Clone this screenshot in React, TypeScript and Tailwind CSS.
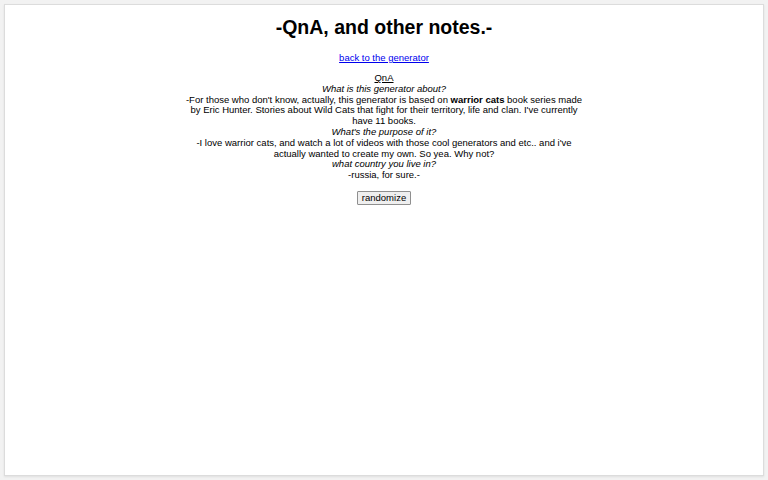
export default function App() {
  return (
    <div className="min-h-screen bg-[#f2f2f2] p-[4px] font-['Liberation_Sans',Arial,sans-serif]">
      <div className="h-[472px] bg-white border border-[#dcdcdc] shadow-[0_1px_2px_rgba(0,0,0,0.08)] flex flex-col items-center text-black">
        <h1 className="mt-[11px] text-[19.5px] leading-[22px] font-bold">-QnA, and other notes.-</h1>
        <a href="#" className="mt-[14px] text-[9.5px] leading-[11px] text-[#0000ee] underline">
          back to the generator
        </a>
        <div className="mt-[10px] w-[400px] text-center text-[9.5px] leading-[10.8px]">
          <div className="underline">QnA</div>
          <div className="italic">What is this generator about?</div>
          <div>
            -For those who don't know, actually, this generator is based on <b>warrior cats</b> book series made by Eric
            Hunter. Stories about Wild Cats that fight for their territory, life and clan. I've currently have 11 books.
          </div>
          <div className="italic">What's the purpose of it?</div>
          <div>
            -I love warrior cats, and watch a lot of videos with those cool generators and etc.. and i've actually wanted
            to create my own. So yea. Why not?
          </div>
          <div className="italic">what country you live in?</div>
          <div>-russia, for sure.-</div>
        </div>
        <button className="mt-[10px] px-[4px] h-[14px] text-[9.5px] leading-[12px] bg-[#efefef] border border-[#8f8f8f] rounded-[1px]">
          randomize
        </button>
      </div>
    </div>
  );
}
